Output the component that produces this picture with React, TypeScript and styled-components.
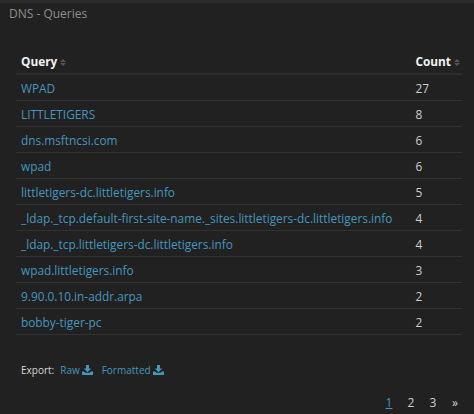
import React from "react";
import styled, { createGlobalStyle } from "styled-components";

const Global = createGlobalStyle`
  html, body { margin: 0; padding: 0; background: #1f1f1f; }
  body { font-family: "Open Sans", "Liberation Sans", sans-serif; }
`;

const Panel = styled.div`
  width: 474px;
  height: 414px;
  box-sizing: border-box;
  background: #212121;
  border-top: 3px solid #2c2c2c;
  display: flex;
  flex-direction: column;
  overflow: hidden;
`;

const Title = styled.div`
  color: #8e8e8e;
  font-size: 12px;
  padding: 2px 0 0 9px;
  height: 30px;
`;

const Body = styled.div`
  padding: 18px 12px 0 16px;
  display: flex;
  flex-direction: column;
  flex: 1;
`;

const Table = styled.table`
  width: 100%;
  border-collapse: collapse;
  font-size: 11.85px;
`;

const Th = styled.th<{ $last?: boolean }>`
  text-align: left;
  color: #f2f2f2;
  font-weight: 700;
  white-space: nowrap;
  padding: 0 ${(p) => (p.$last ? "2px" : "5px")} 4px 5px;
  height: 16px;
  border-bottom: 2px solid #2d2d2d;
  width: ${(p) => (p.$last ? "1px" : "auto")};
`;

const Td = styled.td<{ $last?: boolean }>`
  padding: 0 ${(p) => (p.$last ? "2px" : "5px")} 0 5px;
  height: 25px;
  white-space: nowrap;
  border-bottom: 1px solid #323232;
  color: #cfcfcf;
`;

const Link = styled.span`
  color: #4596bf;
`;

const Sort = styled.span`
  display: inline-flex;
  flex-direction: column;
  vertical-align: middle;
  margin-left: 3px;
  gap: 1px;
  &::before, &::after {
    content: "";
    width: 0;
    height: 0;
    border-left: 3px solid transparent;
    border-right: 3px solid transparent;
  }
  &::before { border-bottom: 3px solid #555; }
  &::after { border-top: 3px solid #555; }
`;

const Footer = styled.div`
  display: flex;
  align-items: center;
  gap: 6px;
  padding: 28px 0 0 5px;
  font-size: 10px;
  color: #d8d8d8;
`;

const ExportLink = styled.span`
  color: #4596bf;
  display: inline-flex;
  align-items: center;
  gap: 2px;
  margin-right: 3px;
`;

const Pager = styled.div`
  margin-top: auto;
  margin-right: -4px;
  display: flex;
  justify-content: flex-end;
  padding: 0 0 3px 0;
  font-size: 12px;
`;

const Page = styled.span<{ $active?: boolean }>`
  width: 22px;
  text-align: center;
  color: ${(p) => (p.$active ? "#4596bf" : "#d0d0d0")};
  text-decoration: ${(p) => (p.$active ? "underline" : "none")};
`;

const Dl = () => (
  <svg width="11" height="10" viewBox="0 0 11 10">
    <path d="M4 0h3v3.5h2.2L5.5 7.2 1.8 3.5H4z" fill="#4596bf" />
    <path d="M0 6.5h2l1.5 1.3h4L9 6.5h2V10H0z" fill="#4596bf" />
  </svg>
);

const rows: [string, number][] = [
  ["WPAD", 27],
  ["LITTLETIGERS", 8],
  ["dns.msftncsi.com", 6],
  ["wpad", 6],
  ["littletigers-dc.littletigers.info", 5],
  ["_ldap._tcp.default-first-site-name._sites.littletigers-dc.littletigers.info", 4],
  ["_ldap._tcp.littletigers-dc.littletigers.info", 4],
  ["wpad.littletigers.info", 3],
  ["9.90.0.10.in-addr.arpa", 2],
  ["bobby-tiger-pc", 2],
];

export default function App() {
  return (
    <>
      <Global />
      <Panel>
        <Title>DNS - Queries</Title>
        <Body>
          <Table>
            <thead>
              <tr>
                <Th>
                  Query<Sort />
                </Th>
                <Th $last>
                  Count<Sort />
                </Th>
              </tr>
            </thead>
            <tbody>
              {rows.map(([q, c]) => (
                <tr key={q}>
                  <Td>
                    <Link>{q}</Link>
                  </Td>
                  <Td $last>{c}</Td>
                </tr>
              ))}
            </tbody>
          </Table>
          <Footer>
            Export:
            <ExportLink>
              Raw <Dl />
            </ExportLink>
            <ExportLink>
              Formatted <Dl />
            </ExportLink>
          </Footer>
          <Pager>
            <Page $active>1</Page>
            <Page>2</Page>
            <Page>3</Page>
            <Page>»</Page>
          </Pager>
        </Body>
      </Panel>
    </>
  );
}
